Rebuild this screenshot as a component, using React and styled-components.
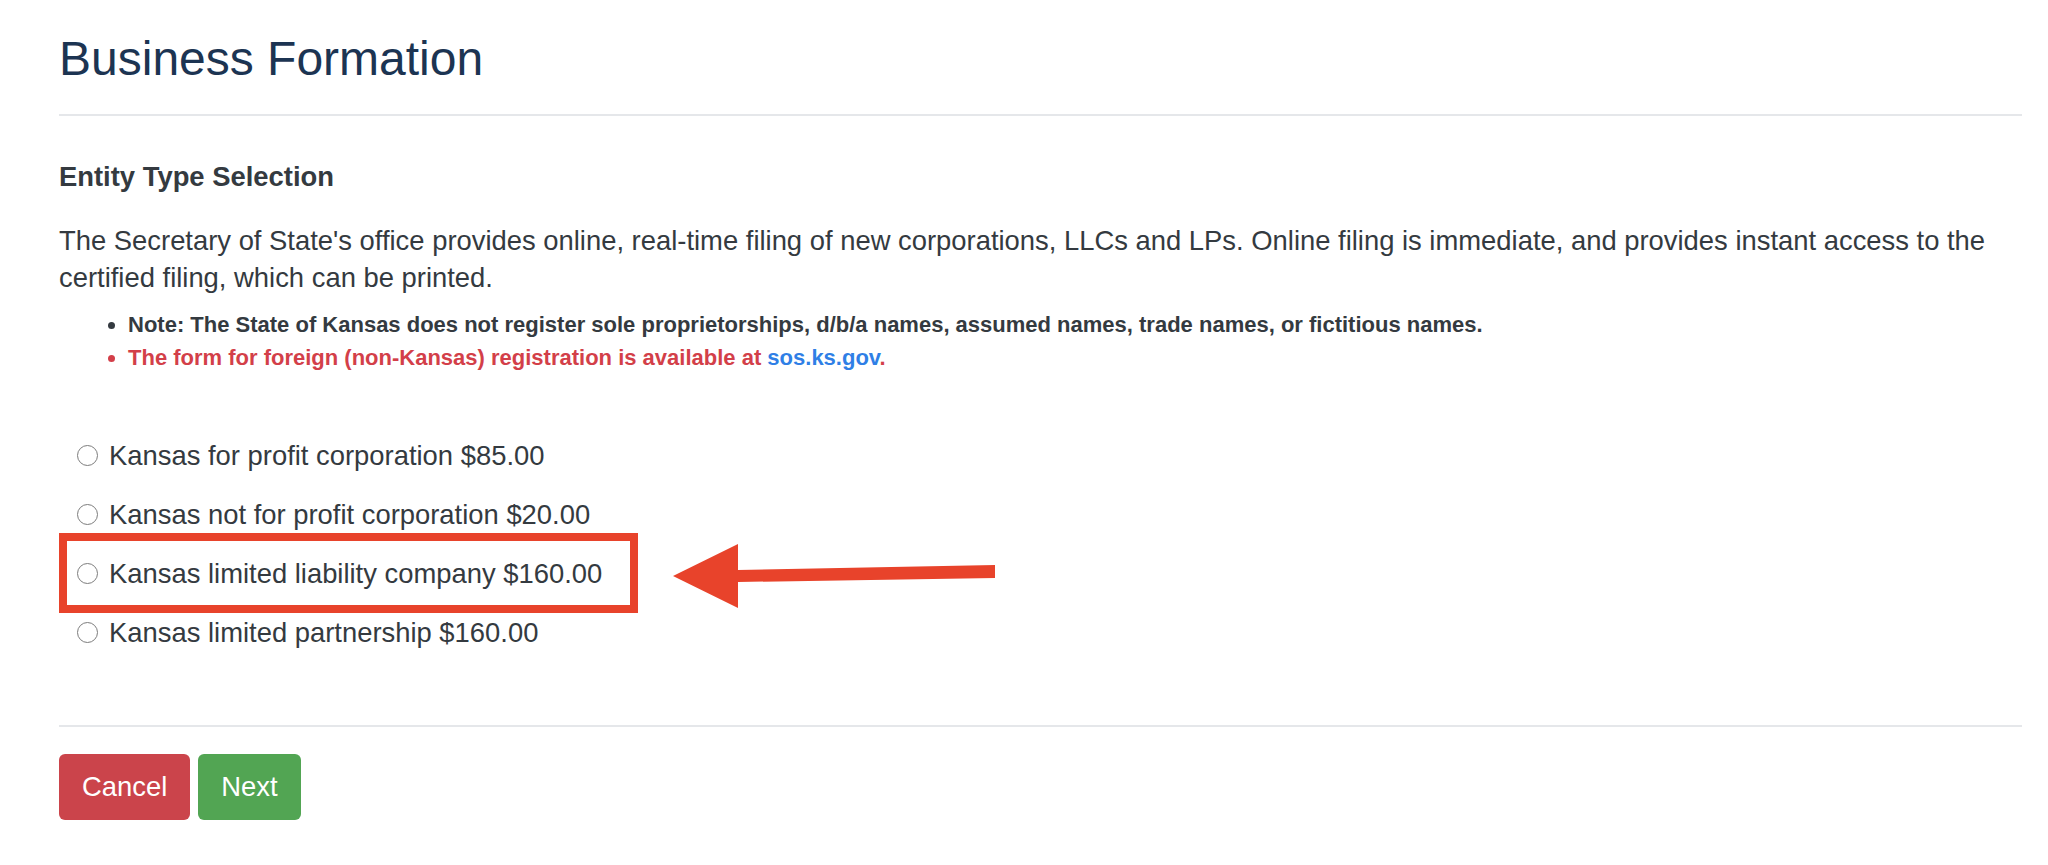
import React, { useState } from "react";
import styled, { createGlobalStyle } from "styled-components";

const GlobalStyle = createGlobalStyle`
  body {
    margin: 0;
    background: #fff;
    font-family: "Liberation Sans", Arial, Helvetica, sans-serif;
    font-size: 27.4px;
    color: #343a40;
  }
`;

const Page = styled.div`
  padding: 30px 26px 40px 59px;
`;

const Title = styled.h1`
  margin: 0;
  font-size: 48px;
  line-height: 1.2;
  font-weight: 400;
  color: #1c3452;
`;

const Rule = styled.hr`
  margin: ${(p) => p.$top}px 0 0;
  border: 0;
  height: 2px;
  background: #e5e7ea;
`;

const Heading = styled.h5`
  margin: 45px 0 0;
  font-size: 27.4px;
  line-height: 1.2;
  font-weight: 700;
  color: #343a40;
`;

const Intro = styled.p`
  margin: 29px 0 0;
  font-size: 27.4px;
  line-height: 37px;
`;

const Notes = styled.ul`
  margin: 12px 0 0;
  padding-left: 69px;
  font-size: 22px;
  line-height: 33px;
  font-weight: 700;
`;

const Note = styled.li`
  color: ${(p) => (p.$danger ? "#d33f49" : "#343a40")};
`;

const Link = styled.a`
  color: #2f7fe6;
  text-decoration: none;
`;

const Options = styled.div`
  margin-top: 52px;
  display: flex;
  flex-direction: column;
`;

const Option = styled.label`
  position: relative;
  display: flex;
  align-items: center;
  height: 59px;
  padding-left: 18px;
  font-size: 27.4px;
  color: #343a40;
  cursor: pointer;
`;

const Radio = styled.input`
  appearance: none;
  margin: 0 11px 0 0;
  width: 21px;
  height: 21px;
  border: 1.5px solid #7c7c7c;
  border-radius: 50%;
  background: #fff;
  flex-shrink: 0;

  &:checked {
    border-color: #2f7fe6;
    box-shadow: inset 0 0 0 4px #fff;
    background: #2f7fe6;
  }
`;

/* annotation drawn over the third option */
const Highlight = styled.span`
  position: absolute;
  left: 0;
  top: -11px;
  width: 579px;
  height: 80px;
  box-sizing: border-box;
  border: 8px solid #e8432b;
  pointer-events: none;
`;

const Arrow = styled.svg`
  position: absolute;
  left: 613px;
  top: -4px;
  pointer-events: none;
`;

const Actions = styled.div`
  margin-top: 27px;
  display: flex;
  gap: 8px;
`;

const Button = styled.button`
  height: 66px;
  padding: 0 23px;
  border: 0;
  border-radius: 6px;
  font-family: inherit;
  font-size: 27.4px;
  color: #fff;
  background: ${(p) => (p.$variant === "danger" ? "#cb444b" : "#52a553")};
  cursor: pointer;
`;

const options = [
  { id: "corp", label: "Kansas for profit corporation $85.00" },
  { id: "npcorp", label: "Kansas not for profit corporation $20.00" },
  { id: "llc", label: "Kansas limited liability company $160.00", marked: true },
  { id: "lp", label: "Kansas limited partnership $160.00" },
];

export default function App() {
  const [entity, setEntity] = useState("");

  return (
    <>
      <GlobalStyle />
      <Page>
        <Title>Business Formation</Title>
        <Rule $top={26} />
        <Heading>Entity Type Selection</Heading>
        <Intro>
          The Secretary of State's office provides online, real-time filing of new
          corporations, LLCs and LPs. Online filing is immediate, and provides instant
          access to the certified filing, which can be printed.
        </Intro>
        <Notes>
          <Note>
            Note: The State of Kansas does not register sole proprietorships, d/b/a
            names, assumed names, trade names, or fictitious names.
          </Note>
          <Note $danger>
            The form for foreign (non-Kansas) registration is available at{" "}
            <Link href="#">sos.ks.gov</Link>.
          </Note>
        </Notes>

        <Options>
          {options.map((o) => (
            <Option key={o.id}>
              <Radio
                type="radio"
                name="entity"
                checked={entity === o.id}
                onChange={() => setEntity(o.id)}
              />
              {o.label}
              {o.marked && (
                <>
                  <Highlight />
                  <Arrow width="326" height="70" viewBox="0 0 326 70">
                    <polygon
                      points="1,36 66,4 66,30 323,25 323,38 66,42 66,68"
                      fill="#e8432b"
                    />
                  </Arrow>
                </>
              )}
            </Option>
          ))}
        </Options>

        <Rule $top={63} />
        <Actions>
          <Button $variant="danger">Cancel</Button>
          <Button $variant="success">Next</Button>
        </Actions>
      </Page>
    </>
  );
}
